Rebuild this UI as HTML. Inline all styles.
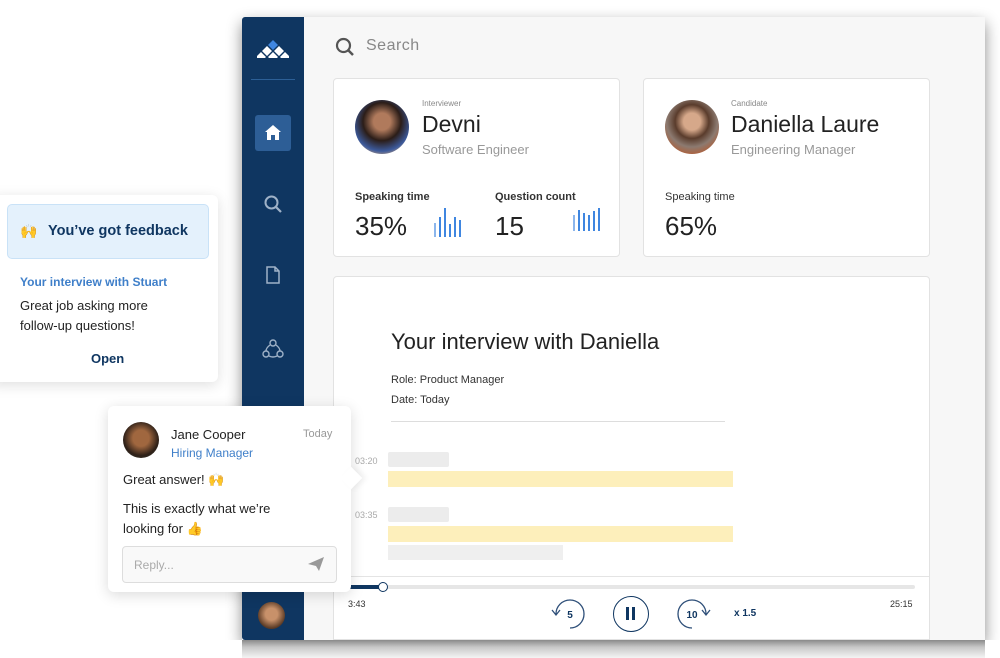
<!DOCTYPE html>
<html><head><meta charset="utf-8"><style>
*{box-sizing:border-box;margin:0;padding:0}
body{width:1000px;height:658px;background:#fff;position:relative;overflow:hidden;font-family:"Liberation Sans",sans-serif;color:#222}
.a{position:absolute}
.win{left:242px;top:17px;width:743px;height:623px;background:#f7f7f7;box-shadow:0 6px 14px rgba(0,0,0,.45)}
.side{left:242px;top:17px;width:62px;height:623px;background:#0f3661;border-radius:3px 0 0 3px}
.card{background:#fff;border:1px solid #e2e2e2;border-radius:4px}
.bars span{display:inline-block;width:2px;background:#3f86e0;margin-right:3px;vertical-align:bottom}
.av{border-radius:50%}
</style></head><body>
<div class="a win"></div>
<div class="a side"></div>
<!-- logo -->
<svg class="a" style="left:257px;top:38px" width="32" height="24" viewBox="0 0 32 24">
<defs><clipPath id="c"><rect x="0" y="0" width="32" height="20"/></clipPath></defs>
<g clip-path="url(#c)">
<path d="M16 2 L21 7 L16 12 L11 7Z" fill="#3f86e0"/>
<path d="M10 8 L15 13 L10 18 L5 13Z M22 8 L27 13 L22 18 L17 13Z" fill="#fff"/>
<path d="M4 14 L9 19 L4 24 L-1 19Z M16 14 L21 19 L16 24 L11 19Z M28 14 L33 19 L28 24 L23 19Z" fill="#fff"/>
</g></svg>
<div class="a" style="left:251px;top:79px;width:44px;height:1px;background:#2c5f96"></div>
<div class="a" style="left:255px;top:115px;width:36px;height:36px;background:#2d5e96;border-radius:3px"></div>
<svg class="a" style="left:264px;top:124px" width="18" height="17" viewBox="0 0 18 17"><path d="M9 1 L17 8 H15 V16 H11 V11 H7 V16 H3 V8 H1Z" fill="#fff"/></svg>
<svg class="a" style="left:263px;top:194px" width="20" height="20" viewBox="0 0 20 20"><circle cx="8.5" cy="8.5" r="6" stroke="#9fb2c8" stroke-width="2" fill="none"/><path d="M13 13 L18 18" stroke="#9fb2c8" stroke-width="2.2"/></svg>
<svg class="a" style="left:266px;top:266px" width="14" height="18" viewBox="0 0 14 18"><path d="M1 1 H9 L13 5 V17 H1Z M9 1 V5 H13" stroke="#9fb2c8" stroke-width="1.5" fill="none"/></svg>
<svg class="a" style="left:262px;top:339px" width="22" height="20" viewBox="0 0 22 20"><circle cx="11" cy="4" r="3" stroke="#9fb2c8" stroke-width="1.4" fill="none"/><circle cx="4" cy="15" r="3" stroke="#9fb2c8" stroke-width="1.4" fill="none"/><circle cx="18" cy="15" r="3" stroke="#9fb2c8" stroke-width="1.4" fill="none"/><path d="M8 6 Q4 9 4 12 M14 6 Q18 9 18 12 M7 17 Q11 19 15 17" stroke="#9fb2c8" stroke-width="1.4" fill="none"/></svg>
<div class="a av" style="left:258px;top:602px;width:27px;height:27px;background:radial-gradient(circle at 50% 45%,#c8916a 30%,#5a3a25 70%)"></div>
<!-- search -->
<svg class="a" style="left:335px;top:37px" width="20" height="20" viewBox="0 0 20 20"><circle cx="8.5" cy="8.5" r="6.5" stroke="#555" stroke-width="2.2" fill="none"/><path d="M13 13 L18 18" stroke="#555" stroke-width="2.5"/></svg>
<div class="a" style="left:366px;top:37px;font-size:16px;color:#888;letter-spacing:.5px">Search</div>
<!-- card 1 -->
<div class="a card" style="left:333px;top:78px;width:287px;height:179px"></div>
<div class="a av" style="left:355px;top:100px;width:54px;height:54px;background:radial-gradient(circle at 50% 40%,#b07a5c 20%,#2b1d18 45%,#3c5a9c 70%,#c9a27a 85%)"></div>
<div class="a" style="left:422px;top:99px;font-size:8px;color:#888">Interviewer</div>
<div class="a" style="left:422px;top:111px;font-size:23px;color:#222">Devni</div>
<div class="a" style="left:422px;top:142px;font-size:13px;color:#999">Software Engineer</div>
<div class="a" style="left:355px;top:191px;font-size:11px;font-weight:bold;color:#333">Speaking time</div>
<div class="a" style="left:355px;top:211px;font-size:26px;color:#222">35%</div>
<div class="a bars" style="left:434px;top:208px;height:30px;line-height:0"><span style="height:14px;opacity:.6"></span><span style="height:20px"></span><span style="height:29px"></span><span style="height:13px"></span><span style="height:20px"></span><span style="height:17px"></span></div>
<div class="a" style="left:495px;top:191px;font-size:11px;font-weight:bold;color:#333">Question count</div>
<div class="a" style="left:495px;top:211px;font-size:26px;color:#222">15</div>
<div class="a bars" style="left:573px;top:208px;height:30px;line-height:0"><span style="height:16px;opacity:.6"></span><span style="height:21px"></span><span style="height:18px"></span><span style="height:16px"></span><span style="height:20px"></span><span style="height:23px"></span></div>
<!-- card 2 -->
<div class="a card" style="left:643px;top:78px;width:287px;height:179px"></div>
<div class="a av" style="left:665px;top:100px;width:54px;height:54px;background:radial-gradient(circle at 50% 40%,#d6a88a 20%,#5a3c2c 40%,#8c7a70 60%,#b9592c 85%)"></div>
<div class="a" style="left:731px;top:99px;font-size:8px;color:#888">Candidate</div>
<div class="a" style="left:731px;top:111px;font-size:23px;color:#222">Daniella Laure</div>
<div class="a" style="left:731px;top:142px;font-size:13px;color:#999">Engineering Manager</div>
<div class="a" style="left:665px;top:191px;font-size:11px;color:#333">Speaking time</div>
<div class="a" style="left:665px;top:211px;font-size:26px;color:#222">65%</div>
<!-- interview card -->
<div class="a card" style="left:333px;top:276px;width:597px;height:364px;border-radius:4px 4px 0 0"></div>
<div class="a" style="left:391px;top:329px;font-size:22px;color:#222">Your interview with Daniella</div>
<div class="a" style="left:391px;top:374px;font-size:11px;color:#333">Role: Product Manager</div>
<div class="a" style="left:391px;top:394px;font-size:11px;color:#333">Date: Today</div>
<div class="a" style="left:391px;top:421px;width:334px;height:1px;background:#ddd"></div>
<div class="a" style="left:355px;top:456px;font-size:9px;color:#aaa">03:20</div>
<div class="a" style="left:388px;top:452px;width:61px;height:15px;background:#ececec;border-radius:2px"></div>
<div class="a" style="left:388px;top:471px;width:345px;height:16px;background:#fdefbb"></div>
<div class="a" style="left:355px;top:510px;font-size:9px;color:#aaa">03:35</div>
<div class="a" style="left:388px;top:507px;width:61px;height:15px;background:#ececec;border-radius:2px"></div>
<div class="a" style="left:388px;top:526px;width:345px;height:16px;background:#fdefbb"></div>
<div class="a" style="left:388px;top:545px;width:175px;height:15px;background:#efefef"></div>
<div class="a" style="left:334px;top:576px;width:595px;height:1px;background:#e4e4e4"></div>
<div class="a" style="left:348px;top:585px;width:567px;height:4px;background:#e6e6e6;border-radius:2px"></div>
<div class="a" style="left:348px;top:585px;width:36px;height:4px;background:#0f3661"></div>
<div class="a" style="left:378px;top:582px;width:10px;height:10px;border:1.5px solid #0f3661;background:#fff;border-radius:50%"></div>
<div class="a" style="left:348px;top:599px;font-size:9px;color:#333">3:43</div>
<div class="a" style="left:890px;top:599px;font-size:9px;color:#333">25:15</div>
<svg class="a" style="left:550px;top:596px" width="40" height="36" viewBox="0 0 40 36"><path d="M6 18 A14 14 0 1 1 20 32" stroke="#2d4e78" stroke-width="1.3" fill="none"/><path d="M2 14 L6 19 L10 14" stroke="#2d4e78" stroke-width="1.3" fill="none"/><text x="20" y="22" text-anchor="middle" font-size="10" font-weight="bold" fill="#0f3661" font-family="Liberation Sans">5</text></svg>
<div class="a" style="left:613px;top:596px;width:36px;height:36px;border:1.5px solid #0f3661;border-radius:50%"></div>
<div class="a" style="left:626px;top:607px;width:3px;height:13px;background:#0f3661"></div>
<div class="a" style="left:632px;top:607px;width:3px;height:13px;background:#0f3661"></div>
<svg class="a" style="left:672px;top:596px" width="42" height="36" viewBox="0 0 42 36"><path d="M34 18 A14 14 0 1 0 20 32" stroke="#2d4e78" stroke-width="1.3" fill="none"/><path d="M30 14 L34 19 L38 14" stroke="#2d4e78" stroke-width="1.3" fill="none"/><text x="20" y="22" text-anchor="middle" font-size="10" font-weight="bold" fill="#0f3661" font-family="Liberation Sans">10</text></svg>
<div class="a" style="left:734px;top:608px;font-size:10px;font-weight:bold;color:#0f3661">x 1.5</div>
<!-- bottom shadow band -->
<div class="a" style="left:0;top:640px;width:1000px;height:18px;background:#fff"></div>
<div class="a" style="left:242px;top:640px;width:743px;height:18px;background:linear-gradient(#8a8a8a,#c8c8c8 40%,#f4f4f4)"></div>
<!-- feedback card -->
<div class="a" style="left:-10px;top:195px;width:228px;height:187px;background:#fff;border-radius:6px;box-shadow:0 3px 14px rgba(0,0,0,.13)"></div>
<div class="a" style="left:7px;top:204px;width:202px;height:55px;background:#e4f1fc;border:1px solid #c9e2f7;border-radius:5px"></div>
<div class="a" style="left:20px;top:223px;font-size:14px">🙌</div>
<div class="a" style="left:48px;top:223px;font-size:14.5px;font-weight:bold;color:#0f3661">You’ve got feedback</div>
<div class="a" style="left:20px;top:275px;font-size:12px;font-weight:bold;color:#3f7fc9">Your interview with Stuart</div>
<div class="a" style="left:20px;top:296px;font-size:13px;line-height:20px;color:#222">Great job asking more<br>follow-up questions!</div>
<div class="a" style="left:91px;top:351px;font-size:13px;font-weight:bold;color:#0f3661">Open</div>
<!-- comment card -->
<div class="a" style="left:108px;top:406px;width:243px;height:186px;background:#fff;border-radius:6px;box-shadow:0 3px 14px rgba(0,0,0,.15)"></div>
<div class="a" style="left:343px;top:470px;width:16px;height:16px;background:#fff;transform:rotate(45deg);box-shadow:3px -3px 6px rgba(0,0,0,.06)"></div>
<div class="a av" style="left:123px;top:422px;width:36px;height:36px;background:radial-gradient(circle at 50% 45%,#a0673f 30%,#2e2018 65%,#3a3a30 90%)"></div>
<div class="a" style="left:171px;top:427px;font-size:13px;color:#222">Jane Cooper</div>
<div class="a" style="left:171px;top:446px;font-size:12px;color:#3f7fc9">Hiring Manager</div>
<div class="a" style="left:303px;top:428px;font-size:11px;color:#999">Today</div>
<div class="a" style="left:123px;top:472px;font-size:13px;color:#222">Great answer! 🙌</div>
<div class="a" style="left:123px;top:499px;font-size:13px;line-height:20px;color:#222">This is exactly what we’re<br>looking for 👍</div>
<div class="a" style="left:122px;top:546px;width:215px;height:37px;background:#f9f9f9;border:1px solid #ddd;border-radius:4px"></div>
<div class="a" style="left:134px;top:558px;font-size:12px;color:#aaa">Reply...</div>
<svg class="a" style="left:307px;top:556px" width="18" height="16" viewBox="0 0 18 16"><path d="M1 8 L17 1 L12 15 L9 10Z" fill="#999"/></svg>
</body></html>
